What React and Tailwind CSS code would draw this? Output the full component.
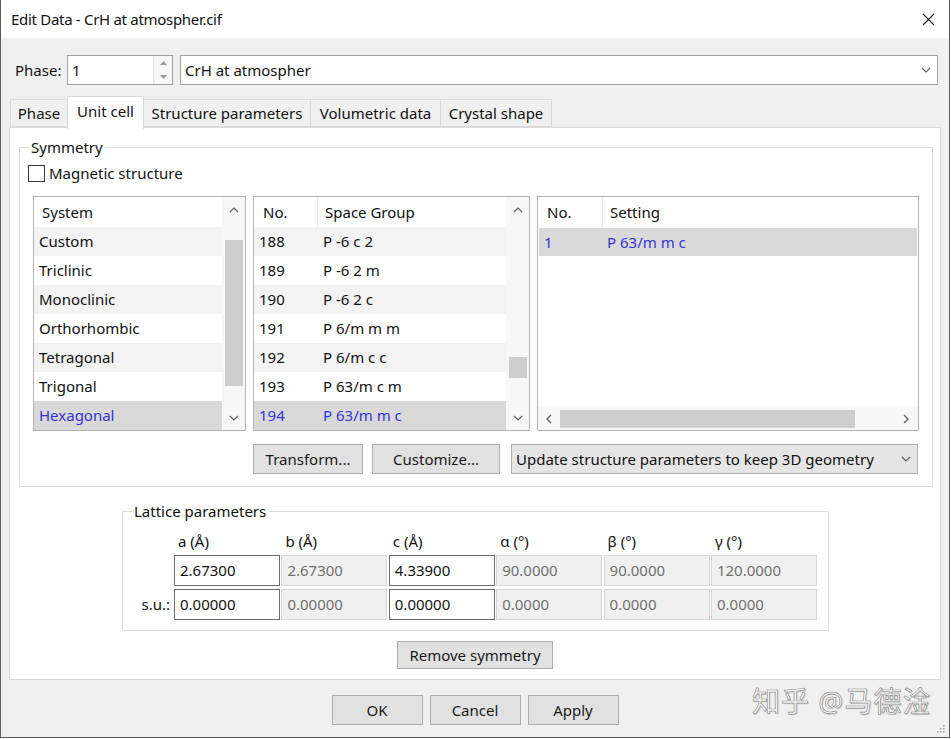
import React from "react";

const ChevDown = ({ className = "" }) => (
  <svg width="10" height="6" viewBox="0 0 10 6" className={className}>
    <path d="M1 1 L5 5 L9 1" fill="none" stroke="#606060" strokeWidth="1.2" />
  </svg>
);
const ChevUp = ({ className = "" }) => (
  <svg width="10" height="6" viewBox="0 0 10 6" className={className}>
    <path d="M1 5 L5 1 L9 5" fill="none" stroke="#606060" strokeWidth="1.2" />
  </svg>
);
const ChevLeft = () => (
  <svg width="6" height="10" viewBox="0 0 6 10">
    <path d="M5 1 L1 5 L5 9" fill="none" stroke="#606060" strokeWidth="1.3" />
  </svg>
);
const ChevRight = () => (
  <svg width="6" height="10" viewBox="0 0 6 10">
    <path d="M1 1 L5 5 L1 9" fill="none" stroke="#606060" strokeWidth="1.3" />
  </svg>
);

const Btn = ({ w, h = "h-[30px]", children }) => (
  <div
    className={`${w} ${h} flex items-center justify-center bg-[#e1e1e1] border border-[#adadad] text-[15px] text-[#1a1a1a]`}
  >
    {children}
  </div>
);

const VScroll = ({ topGap, thumbH }) => (
  <div className="w-[23px] h-full bg-[#f7f7f7] flex flex-col items-center">
    <div className="h-[26px] w-full flex items-center justify-center">
      <ChevUp />
    </div>
    <div style={{ height: topGap }} />
    <div className="w-[18px] bg-[#cdcdcd]" style={{ height: thumbH }} />
    <div className="flex-1" />
    <div className="h-[24px] w-full flex items-center justify-center">
      <ChevDown />
    </div>
  </div>
);

const rowBg = (i, sel) =>
  sel ? "bg-[#d9d9d9] text-[#3434d6]" : i % 2 === 0 ? "bg-[#f3f3f3]" : "bg-white";

function SystemList() {
  const items = ["Custom", "Triclinic", "Monoclinic", "Orthorhombic", "Tetragonal", "Trigonal", "Hexagonal"];
  return (
    <div className="w-[213px] h-[235px] border border-[#b4b4b4] bg-white flex">
      <div className="flex-1 flex flex-col">
        <div className="h-[30px] flex items-center pl-[8px] bg-white">System</div>
        {items.map((t, i) => (
          <div key={t} className={`h-[29px] flex items-center pl-[5px] ${rowBg(i, i === 6)}`}>
            {t}
          </div>
        ))}
      </div>
      <VScroll topGap={17} thumbH={146} />
    </div>
  );
}

function SpaceGroupList() {
  const items = [
    ["188", "P -6 c 2"],
    ["189", "P -6 2 m"],
    ["190", "P -6 2 c"],
    ["191", "P 6/m m m"],
    ["192", "P 6/m c c"],
    ["193", "P 63/m c m"],
    ["194", "P 63/m m c"],
  ];
  return (
    <div className="w-[277px] h-[235px] border border-[#b4b4b4] bg-white flex">
      <div className="flex-1 flex flex-col">
        <div className="h-[30px] flex items-center bg-white">
          <div className="w-[64px] h-full flex items-center pl-[9px] border-r border-[#ececec]">No.</div>
          <div className="pl-[7px]">Space Group</div>
        </div>
        {items.map(([n, s], i) => (
          <div key={n} className={`h-[29px] flex items-center ${rowBg(i, i === 6)}`}>
            <div className="w-[64px] pl-[5px]">{n}</div>
            <div className="pl-[5px]">{s}</div>
          </div>
        ))}
      </div>
      <VScroll topGap={134} thumbH={21} />
    </div>
  );
}

function SettingList() {
  return (
    <div className="w-[382px] h-[235px] border border-[#b4b4b4] bg-white flex flex-col">
      <div className="h-[31px] flex items-center">
        <div className="w-[65px] h-full flex items-center pl-[9px] border-r border-[#ececec]">No.</div>
        <div className="pl-[7px]">Setting</div>
      </div>
      <div className="mx-[1px] h-[28px] flex items-center bg-[#d9d9d9] text-[#3434d6]">
        <div className="w-[64px] pl-[5px]">1</div>
        <div className="pl-[4px]">P 63/m m c</div>
      </div>
      <div className="flex-1" />
      <div className="h-[23px] bg-[#f7f7f7] flex items-center">
        <div className="w-[22px] flex justify-center">
          <ChevLeft />
        </div>
        <div className="w-[295px] h-[18px] bg-[#cdcdcd]" />
        <div className="flex-1" />
        <div className="w-[24px] flex justify-center">
          <ChevRight />
        </div>
      </div>
    </div>
  );
}

const Field = ({ v, on }) => (
  <div
    className={`w-[106px] h-[31px] flex items-center pl-[5px] ${
      on ? "bg-white border border-[#6b6b6b] text-[#111]" : "bg-[#f0f0f0] border border-[#d6d6d6] text-[#707070]"
    }`}
  >
    {v}
  </div>
);

export default function App() {
  const tabs = [
    ["Phase", "w-[57px]"],
    ["Unit cell", "w-[77px]"],
    ["Structure parameters", "w-[167px]"],
    ["Volumetric data", "w-[130px]"],
    ["Crystal shape", "w-[111px]"],
  ];
  const heads = ["a (Å)", "b (Å)", "c (Å)", "α (°)", "β (°)", "γ (°)"];
  const row1 = [["2.67300", 1], ["2.67300", 0], ["4.33900", 1], ["90.0000", 0], ["90.0000", 0], ["120.0000", 0]];
  const row2 = [["0.00000", 1], ["0.00000", 0], ["0.00000", 1], ["0.0000", 0], ["0.0000", 0], ["0.0000", 0]];
  return (
    <div className="relative w-[950px] h-[738px] bg-[#f0f0f0] border-l border-r border-b border-[#5c5c5c] overflow-hidden font-['Noto_Sans','Noto_Sans_CJK_SC',sans-serif] text-[15px] text-[#111] leading-none">
      {/* title bar */}
      <div className="h-[38px] bg-white flex items-center justify-between pl-[10px] pr-[14px]">
        <span className="text-[15px] tracking-[-0.3px]">Edit Data - CrH at atmospher.cif</span>
        <svg width="13" height="13" viewBox="0 0 13 13">
          <path d="M1 1 L12 12 M12 1 L1 12" stroke="#222" strokeWidth="1.1" />
        </svg>
      </div>

      {/* phase row */}
      <div className="mt-[17px] flex items-center h-[30px] pl-[14px]">
        <div className="w-[52px]">Phase:</div>
        <div className="w-[106px] h-[30px] bg-white border border-[#a0a0a0] flex items-center">
          <span className="pl-[4px] flex-1">1</span>
          <div className="w-[19px] h-full flex flex-col border-l border-[#e6e6e6] bg-[#f7f7f7]">
            <div className="flex-1 flex items-center justify-center">
              <svg width="7" height="4" viewBox="0 0 7 4"><path d="M0 4 L3.5 0 L7 4Z" fill="#9a9a9a" /></svg>
            </div>
            <div className="flex-1 flex items-center justify-center">
              <svg width="7" height="4" viewBox="0 0 7 4"><path d="M0 0 L3.5 4 L7 0Z" fill="#9a9a9a" /></svg>
            </div>
          </div>
        </div>
        <div className="ml-[7px] w-[758px] h-[30px] bg-white border border-[#a0a0a0] flex items-center justify-between pl-[4px] pr-[6px]">
          <span>CrH at atmospher</span>
          <ChevDown />
        </div>
      </div>

      {/* tabs */}
      <div className="mt-[11px] flex items-end pl-[9px] h-[31px]">
        {tabs.map(([t, w], i) =>
          i === 1 ? (
            <div
              key={t}
              className={`${w} h-[33px] -mb-[2px] relative z-10 bg-white border border-b-0 border-[#d9d9d9] flex items-center justify-center pb-[4px]`}
            >
              {t}
            </div>
          ) : (
            <div
              key={t}
              className={`${w} h-[28px] bg-[#f0f0f0] border border-[#d9d9d9] ${i > 1 ? "border-l-0" : ""} ${
                i === 0 ? "border-r-0" : ""
              } flex items-center justify-center`}
            >
              {t}
            </div>
          )
        )}
      </div>

      {/* tab panel */}
      <div className="ml-[8px] w-[932px] h-[553px] bg-white border border-[#d9d9d9] pt-[9px] pl-[9px]">
        <fieldset className="w-[914px] border border-[#dcdcdc] pb-[12px]">
          <legend className="ml-[9px] px-[2px] leading-[20px]">Symmetry</legend>
          <div className="mt-[6px] ml-[8px] h-[20px] flex items-center">
            <div className="w-[17px] h-[17px] border border-[#333] bg-white" />
            <span className="ml-[4px]">Magnetic structure</span>
          </div>
          <div className="mt-[13px] ml-[13px] flex">
            <SystemList />
            <div className="w-[7px]" />
            <SpaceGroupList />
            <div className="w-[7px]" />
            <SettingList />
          </div>
          <div className="mt-[13px] ml-[233px] flex">
            <Btn w="w-[110px]">Transform...</Btn>
            <div className="w-[9px]" />
            <Btn w="w-[128px]">Customize...</Btn>
            <div className="w-[11px]" />
            <div className="w-[407px] h-[30px] bg-[#e5e5e5] border border-[#adadad] flex items-center justify-between pl-[4px] pr-[6px]">
              <span>Update structure parameters to keep 3D geometry</span>
              <ChevDown />
            </div>
          </div>
        </fieldset>

        <fieldset className="mt-[14px] ml-[103px] w-[707px] border border-[#dcdcdc] pb-[10px]">
          <legend className="ml-[9px] px-[2px] leading-[20px]">Lattice parameters</legend>
          <div className="mt-[10px] h-[20px] flex items-center">
            <div className="w-[51px]" />
            {heads.map((h) => (
              <div key={h} className="w-[107.4px] pl-[4px]">{h}</div>
            ))}
          </div>
          <div className="mt-[4px] flex items-center">
            <div className="w-[51px]" />
            <div className="flex gap-[1.4px]">
              {row1.map(([v, on], i) => (
                <Field key={i} v={v} on={on} />
              ))}
            </div>
          </div>
          <div className="mt-[3px] flex items-center">
            <div className="w-[51px] text-right pr-[4px]">s.u.:</div>
            <div className="flex gap-[1.4px]">
              {row2.map(([v, on], i) => (
                <Field key={i} v={v} on={on} />
              ))}
            </div>
          </div>
        </fieldset>

        <div className="mt-[10px] ml-[378px]">
          <Btn w="w-[156px]" h="h-[28px]">Remove symmetry</Btn>
        </div>
      </div>

      {/* bottom buttons */}
      <div className="mt-[15px] flex justify-center gap-[7px]">
        <Btn w="w-[91px]">OK</Btn>
        <Btn w="w-[91px]">Cancel</Btn>
        <Btn w="w-[91px]">Apply</Btn>
      </div>

      {/* watermark */}
      <div className="absolute left-[751px] top-[687px] text-[28px] leading-none text-white tracking-[1px] [-webkit-text-stroke:0.7px_#8c8c8c] [text-shadow:1px_1px_1px_#c8c8c8]">
        知乎 @马德淦
      </div>

      {/* resize grip */}
      <svg className="absolute right-[3px] bottom-[3px]" width="10" height="10" viewBox="0 0 10 10">
        {[[8, 2], [8, 5], [5, 5], [8, 8], [5, 8], [2, 8]].map(([x, y], i) => (
          <rect key={i} x={x - 1} y={y - 1} width="1.5" height="1.5" fill="#a0a0a0" />
        ))}
      </svg>
    </div>
  );
}
